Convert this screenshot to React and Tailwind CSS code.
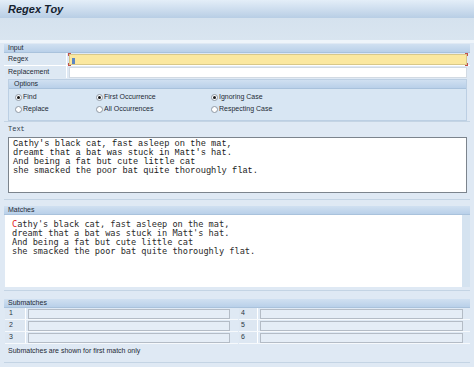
import React from 'react';

const SANS = "font-['Liberation_Sans',Arial,sans-serif]";

function Radio({ checked, label }) {
  return (
    <div className="flex items-center gap-[1px] h-[12px]">
      <span className="w-[7px] h-[7px] rounded-full border border-[#8e98a3] bg-white flex items-center justify-center">
        {checked && <span className="w-[3px] h-[3px] rounded-full bg-[#1a1a1a]" />}
      </span>
      <span className="text-[7px] text-[#1e2a36]">{label}</span>
    </div>
  );
}

function SectionHeader({ children, className = '' }) {
  return (
    <div className={`h-[9px] flex items-center pl-[4px] bg-gradient-to-b from-[#d0e0f1] to-[#b9d0e9] border-b border-[#a9c2dc] text-[7px] text-[#1e2a36] ${className}`}>
      {children}
    </div>
  );
}

function SubRow({ n, labelW, boxW, pad }) {
  return (
    <div className="flex h-[12px] items-center border-b border-white/70">
      <div className={`${labelW} h-full flex items-center ${pad} text-[7px] text-[#2a3642] bg-[#dde7f2] border-r border-white`}>{n}</div>
      <div className={`ml-[2px] ${boxW} h-[10px] bg-[#e5edf6] border border-[#b4bcc6]`} />
    </div>
  );
}

export default function App() {
  const lines = [
    "Cathy's black cat, fast asleep on the mat,",
    "dreamt that a bat was stuck in Matt's hat.",
    "And being a fat but cute little cat",
    "she smacked the poor bat quite thoroughly flat.",
  ];

  return (
    <div className={`w-[474px] h-[367px] overflow-hidden bg-[#dfe9f4] ${SANS}`}>
      {/* title */}
      <div className="h-[18px] flex items-center pl-[8px] bg-gradient-to-b from-[#e4eef8] to-[#b8cee5]">
        <span className="text-[11px] font-bold italic text-[#15222f]">Regex Toy</span>
      </div>
      {/* toolbar */}
      <div className="h-[22px] bg-gradient-to-b from-[#d5e2ee] to-[#d9e5f0]" />
      <div className="h-[3px] bg-[#eef4fa]" />

      <div className="pl-[4px] pr-[4px] pt-[1px] flex flex-col">
        {/* Input section */}
        <div className="flex flex-col border-b border-[#c4d4e4]">
          <SectionHeader>Input</SectionHeader>
          <div className="flex h-[13px] items-center border-b border-white">
            <div className="w-[62px] ml-[1px] h-full flex items-center pl-[3px] text-[7px] text-[#1e2a36] bg-[#dde8f3] border-r border-white">Regex</div>
            <div className="relative ml-[2px] w-[398px] h-[11px] bg-[#fbe8a0] border border-[#d8c88a]">
              <span className="absolute left-[2px] top-[3px] w-[3px] h-[6px] bg-[#5b86c4]" />
              <span className="absolute -left-[2px] -top-[2px] w-[3px] h-[3px] border-l border-t border-[#c0504d]" />
              <span className="absolute -left-[2px] -bottom-[2px] w-[3px] h-[3px] border-l border-b border-[#c0504d]" />
              <span className="absolute -right-[2px] -top-[2px] w-[3px] h-[3px] border-r border-t border-[#c0504d]" />
              <span className="absolute -right-[2px] -bottom-[2px] w-[3px] h-[3px] border-r border-b border-[#c0504d]" />
            </div>
          </div>
          <div className="flex h-[12px] items-center">
            <div className="w-[62px] ml-[1px] h-full flex items-center pl-[3px] text-[7px] text-[#1e2a36] bg-[#dde8f3] border-r border-white">Replacement</div>
            <div className="ml-[2px] w-[398px] h-[11px] bg-white border border-[#d2dae3]" />
          </div>
          {/* Options */}
          <div className="ml-[4px] mr-[3px] mt-[1px] border border-[#bccfe3] bg-[#d8e6f3] flex flex-col">
            <SectionHeader className="pl-[5px]">Options</SectionHeader>
            <div className="grid grid-cols-[81px_115px_1fr] pl-[6px] pt-[2px] pb-[5px]">
              <Radio checked label="Find" />
              <Radio checked label="First Occurrence" />
              <Radio checked label="Ignoring Case" />
              <Radio label="Replace" />
              <Radio label="All Occurrences" />
              <Radio label="Respecting Case" />
            </div>
          </div>
        </div>

        {/* Text */}
        <div className="flex flex-col pt-[3px] pb-[6px] border-b border-[#c4d4e4]">
          <div className="h-[9px] pl-[4px] flex items-center text-[7px] text-[#33404c] font-['Liberation_Mono',monospace]">Text</div>
          <div className="mt-[3px] ml-[4px] w-[459px] h-[56px] bg-white border border-[#7c848d] pl-[4px] pt-[2px] font-['Liberation_Mono',monospace] text-[8.7px] leading-[9px] text-[#1a1a1a]">
            {lines.map((l) => (
              <div key={l} className="whitespace-pre">{l}</div>
            ))}
          </div>
        </div>

        {/* Matches */}
        <div className="mt-[6px] flex flex-col border-b border-[#c4d4e4]">
          <SectionHeader>Matches</SectionHeader>
          <div className="flex">
            <div className="ml-[1px] w-[457px] h-[72px] bg-white pl-[7px] pt-[5px] font-['DejaVu_Sans_Mono',monospace] text-[8.6px] leading-[9px] text-[#2b2b2b]">
              {lines.map((l, i) => (
                <div key={l} className="whitespace-pre">
                  {i === 0 ? (
                    <>
                      <span className="text-[#e0201a]">C</span>
                      {l.slice(1)}
                    </>
                  ) : l}
                </div>
              ))}
            </div>
            <div className="flex-1 bg-[#d5e3f0]" />
          </div>
          <div className="h-[3px]" />
        </div>

        {/* Submatches */}
        <div className="mt-[8px] flex flex-col border-b border-[#c4d4e4] pb-[4px]">
          <SectionHeader>Submatches</SectionHeader>
          <div className="grid grid-cols-[233px_1fr] pl-[1px]">
            <div className="flex flex-col">
              <SubRow n="1" labelW="w-[21px]" boxW="w-[202px]" pad="pl-[4px]" />
              <SubRow n="2" labelW="w-[21px]" boxW="w-[202px]" pad="pl-[4px]" />
              <SubRow n="3" labelW="w-[21px]" boxW="w-[202px]" pad="pl-[4px]" />
            </div>
            <div className="flex flex-col pl-[1px]">
              <SubRow n="4" labelW="w-[19px]" boxW="w-[203px]" pad="pl-[2px]" />
              <SubRow n="5" labelW="w-[19px]" boxW="w-[203px]" pad="pl-[2px]" />
              <SubRow n="6" labelW="w-[19px]" boxW="w-[203px]" pad="pl-[2px]" />
            </div>
          </div>
          <div className="h-[14px] pl-[4px] flex items-center text-[7px] text-[#1e2a36]">Submatches are shown for first match only</div>
        </div>
      </div>
    </div>
  );
}
